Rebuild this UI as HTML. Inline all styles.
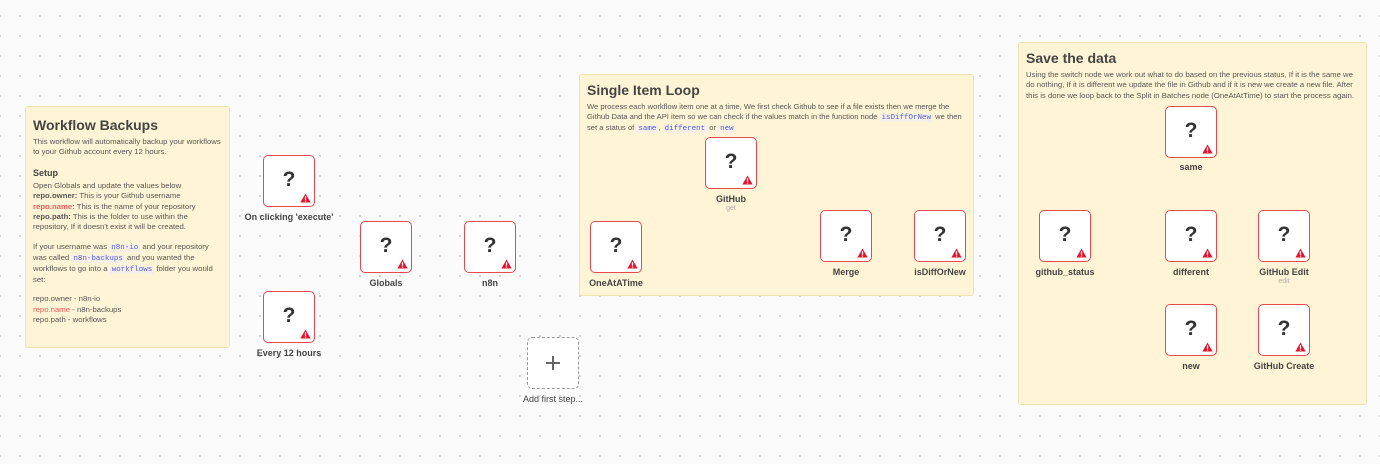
<!DOCTYPE html>
<html><head><meta charset="utf-8"><style>
body{margin:0;width:1380px;height:464px;overflow:hidden;font-family:"Liberation Sans",sans-serif;color:#555;
background-color:#fbfbfb;background-image:radial-gradient(circle,#cfcfcf 0.9px,transparent 1.2px);background-size:20px 20px;background-position:10px 6px;position:relative}
.note{position:absolute;background:#fff5d6;border:1px solid #f1e2b3;border-radius:3px;box-sizing:border-box;padding:6px 7px;font-size:7.75px;line-height:10.4px;color:#555}
.note h1{font-size:14px;font-weight:bold;color:#444;margin:0 0 3px;line-height:18px}
.note h2{font-size:9px;margin:0 0 2px;color:#444;line-height:12px}
.note p{margin:0 0 9px}
code{font-family:"Liberation Mono",monospace;color:#4f5fd9;background:#f5efe8;padding:0 2px;font-size:7.5px;line-height:9px}
.red{color:#ef5a5a}
.n{position:absolute;width:52px;height:52px;box-sizing:border-box;border:1.5px solid #e8484f;border-radius:5px;background:#fff}
.n::before{content:"?";position:absolute;left:0;right:0;top:12px;text-align:center;font-size:21px;font-weight:bold;color:#333}
.n svg{position:absolute;right:3px;bottom:3px}
.l{position:absolute;width:140px;text-align:center;font-size:9px;color:#444;font-weight:bold}
.s{position:absolute;width:140px;text-align:center;font-size:7px;color:#aaa}
.add{position:absolute;left:527px;top:337px;width:52px;height:52px;box-sizing:border-box;border:1.5px dashed #999;border-radius:5px;background:#fff}
</style></head><body>

<div class="note" style="left:25px;top:106px;width:205px;height:242px">
<h1 style="margin-top:3px">Workflow Backups</h1>
<p>This workflow will automatically backup your workflows to your Github account every 12 hours.</p>
<h2>Setup</h2>
<p>Open Globals and update the values below<br><b>repo.owner:</b> This is your Github username<br><b class="red">repo.name:</b> This is the name of your repository<br><b>repo.path:</b> This is the folder to use within the repository, If it doesn't exist it will be created.</p>
<p>If your username was <code>n8n-io</code> and your repository was called <code>n8n-backups</code> and you wanted the workflows to go into a <code>workflows</code> folder you would set:</p>
<p>repo.owner - n8n-io<br><span class="red">repo.name</span> - n8n-backups<br>repo.path - workflows</p>
</div>

<div class="note" style="left:579px;top:74px;width:395px;height:222px;font-size:7.6px">
<h1 style="margin-top:0">Single Item Loop</h1>
<p>We process each workflow item one at a time, We first check Github to see if a file exists then we merge the Github Data and the API item so we can check if the values match in the function node <code>isDiffOrNew</code> we then set a status of <code>same</code>, <code>different</code> or <code>new</code></p>
</div>

<div class="note" style="left:1018px;top:42px;width:349px;height:363px">
<h1 style="margin-top:0">Save the data</h1>
<p>Using the switch node we work out what to do based on the previous status, If it is the same we do nothing, If it is different we update the file in Github and if it is new we create a new file. After this is done we loop back to the Split in Batches node (OneAtAtTime) to start the process again.</p>
</div>

<svg width="0" height="0" style="position:absolute"><defs><symbol id="w" viewBox="0 0 12 11"><path d="M6 0.5L11.6 10.5H0.4Z" fill="#e8102a"/><rect x="5.3" y="3.5" width="1.4" height="4" fill="#fff"/><rect x="5.3" y="8.3" width="1.4" height="1.3" fill="#fff"/></symbol></defs></svg>

<div class="n" style="left:263px;top:155px"><svg width="11" height="10"><use href="#w"/></svg></div><div class="l" style="left:219px;top:212px">On clicking 'execute'</div>
<div class="n" style="left:263px;top:291px"><svg width="11" height="10"><use href="#w"/></svg></div><div class="l" style="left:219px;top:348px">Every 12 hours</div>
<div class="n" style="left:360px;top:221px"><svg width="11" height="10"><use href="#w"/></svg></div><div class="l" style="left:316px;top:278px">Globals</div>
<div class="n" style="left:464px;top:221px"><svg width="11" height="10"><use href="#w"/></svg></div><div class="l" style="left:420px;top:278px">n8n</div>
<div class="add"><div style="position:absolute;left:18px;top:24px;width:14px;height:2px;background:#666"></div><div style="position:absolute;left:24px;top:18px;width:2px;height:14px;background:#666"></div></div><div class="l" style="left:483px;top:394px;font-weight:normal;color:#444">Add first step...</div>

<div class="n" style="left:705px;top:137px"><svg width="11" height="10"><use href="#w"/></svg></div><div class="l" style="left:661px;top:194px">GitHub</div><div class="s" style="left:661px;top:205px">get</div>
<div class="n" style="left:590px;top:221px"><svg width="11" height="10"><use href="#w"/></svg></div><div class="l" style="left:546px;top:278px">OneAtATime</div>
<div class="n" style="left:820px;top:210px"><svg width="11" height="10"><use href="#w"/></svg></div><div class="l" style="left:776px;top:267px">Merge</div>
<div class="n" style="left:914px;top:210px"><svg width="11" height="10"><use href="#w"/></svg></div><div class="l" style="left:870px;top:267px">isDiffOrNew</div>

<div class="n" style="left:1165px;top:106px"><svg width="11" height="10"><use href="#w"/></svg></div><div class="l" style="left:1121px;top:162px">same</div>
<div class="n" style="left:1039px;top:210px"><svg width="11" height="10"><use href="#w"/></svg></div><div class="l" style="left:995px;top:267px">github_status</div>
<div class="n" style="left:1165px;top:210px"><svg width="11" height="10"><use href="#w"/></svg></div><div class="l" style="left:1121px;top:267px">different</div>
<div class="n" style="left:1258px;top:210px"><svg width="11" height="10"><use href="#w"/></svg></div><div class="l" style="left:1214px;top:267px">GitHub Edit</div><div class="s" style="left:1214px;top:278px">edit</div>
<div class="n" style="left:1165px;top:304px"><svg width="11" height="10"><use href="#w"/></svg></div><div class="l" style="left:1121px;top:361px">new</div>
<div class="n" style="left:1258px;top:304px"><svg width="11" height="10"><use href="#w"/></svg></div><div class="l" style="left:1214px;top:361px">GitHub Create</div>
</body></html>
